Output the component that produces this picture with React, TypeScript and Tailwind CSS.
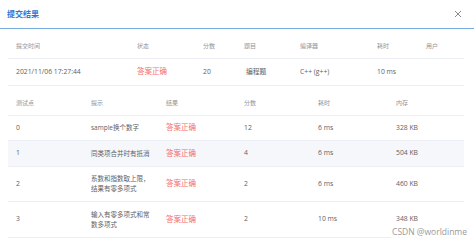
import React from "react"

const font = { fontFamily: '"Open Sans", "Noto Sans CJK SC", sans-serif' }

const topCols = ["w-[121px]", "w-[66px]", "w-[41px]", "w-[56px]", "w-[77px]", "w-[49px]", "w-[46px]"]
const caseCols = ["w-[75px]", "w-[75px]", "w-[78px]", "w-[74px]", "w-[78px]", "w-[76px]"]

const cases = [
  { id: "0", hint: ["sample换个数字"], score: "12", time: "6 ms", mem: "328 KB", h: "h-[25px]", gray: false },
  { id: "1", hint: ["同类项合并时有抵消"], score: "4", time: "6 ms", mem: "504 KB", h: "h-[26px]", gray: true },
  { id: "2", hint: ["系数和指数取上限，", "结果有零多项式"], score: "2", time: "6 ms", mem: "460 KB", h: "h-[35px]", gray: false },
  { id: "3", hint: ["输入有零多项式和常", "数多项式"], score: "2", time: "10 ms", mem: "348 KB", h: "h-[36px]", gray: false },
]

const Ok = () => <span className="text-[7.5px] text-[#f56c6c]">答案正确</span>

export default function App() {
  return (
    <div className="w-[474px] h-[242px] bg-white relative overflow-hidden text-[#606266]" style={font}>
      <div className="h-[29px] flex items-center justify-between pl-[7px] pr-[12px] border-b-[1.5px] border-[#7aaee2]">
        <span className="text-[8px] font-bold text-[#2a78d6]">提交结果</span>
        <svg width="8" height="8" viewBox="0 0 8 8" className="text-[#7a7d82]">
          <path d="M1 1L7 7M7 1L1 7" stroke="currentColor" strokeWidth="0.9" />
        </svg>
      </div>

      <div className="mx-[8px] mt-[6px] w-[456px]">
        <div className="flex h-[24px] items-center border-b border-[#ebeef5] text-[6px] text-[#909399]">
          {["提交时间", "状态", "分数", "题目", "编译器", "耗时", "用户"].map((t, i) => (
            <div key={i} className={`${topCols[i]} pl-[8px]`}>{t}</div>
          ))}
        </div>
        <div className="flex h-[27px] items-center border-b border-[#ebeef5] text-[6.8px]">
          <div className={`${topCols[0]} pl-[8px]`}>2021/11/06 17:27:44</div>
          <div className={`${topCols[1]} pl-[8px]`}><Ok /></div>
          <div className={`${topCols[2]} pl-[8px]`}>20</div>
          <div className={`${topCols[3]} pl-[10px]`}>编程题</div>
          <div className={`${topCols[4]} pl-[8px]`}>C++ (g++)</div>
          <div className={`${topCols[5]} pl-[8px]`}>10 ms</div>
          <div className={`${topCols[6]} pl-[8px]`}></div>
        </div>
      </div>

      <div className="mx-[8px] mt-[6px] w-[456px]">
        <div className="flex h-[24px] items-center border-b border-[#ebeef5] text-[6px] text-[#909399]">
          {["测试点", "提示", "结果", "分数", "耗时", "内存"].map((t, i) => (
            <div key={i} className={`${caseCols[i]} pl-[8px]`}>{t}</div>
          ))}
        </div>
        {cases.map((c) => (
          <div
            key={c.id}
            className={`flex ${c.h} items-center border-b border-[#ebeef5] text-[6.8px] ${c.gray ? "bg-[#f5f7fa]" : ""}`}
          >
            <div className={`${caseCols[0]} pl-[8px]`}>{c.id}</div>
            <div className={`${caseCols[1]} pl-[8px] text-[6.5px] leading-[10px]`}>
              {c.hint.map((l, i) => (
                <div key={i}>{l}</div>
              ))}
            </div>
            <div className={`${caseCols[2]} pl-[8px]`}><Ok /></div>
            <div className={`${caseCols[3]} pl-[8px]`}>{c.score}</div>
            <div className={`${caseCols[4]} pl-[8px]`}>{c.time}</div>
            <div className={`${caseCols[5]} pl-[8px]`}>{c.mem}</div>
          </div>
        ))}
      </div>

      <div className="absolute right-[6px] bottom-[3px] text-[8.5px] text-[#9a9a9a] bg-white/80 px-[1px]">
        CSDN @worldinme
      </div>
    </div>
  )
}
